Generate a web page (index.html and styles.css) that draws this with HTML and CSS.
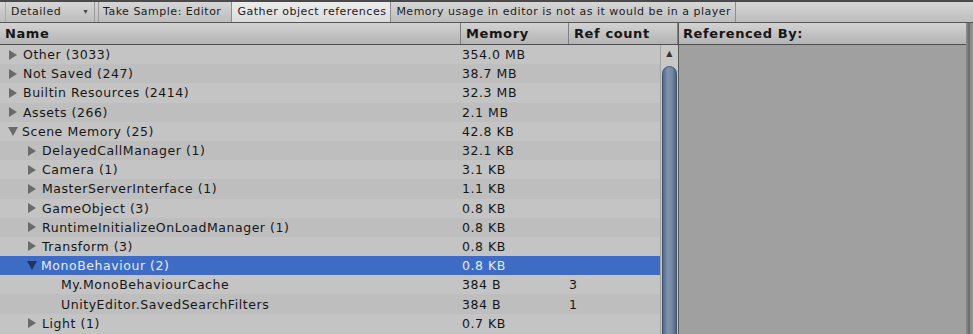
FILE: index.html
```html
<!DOCTYPE html>
<html lang="en">
<head>
  <meta charset="UTF-8" />
  <title>Memory Profiler – Detailed</title>
  <link rel="stylesheet" href="styles.css">
</head>
<body>
  <div class="toolbar">
    <div class="tb-btn dropdown">Detailed <span class="caret">&#9662;</span></div>
    <div class="tb-btn sample">Take Sample: Editor</div>
    <div class="tb-btn on">Gather object references</div>
    <div class="tb-btn">Memory usage in editor is not as it would be in a player</div>
  </div>

  <div class="main">
    <div class="tree-pane">
      <div class="header">
        <div class="hcol name">Name</div>
        <div class="hcol mem">Memory</div>
        <div class="hcol refs">Ref count</div>
      </div>
      <div class="tree-body">
        <div class="rows">
          <div class="row"><div class="name d0"><span class="arrow"></span>Other (3033)</div><div class="mem">354.0 MB</div><div class="refs"></div></div>
          <div class="row"><div class="name d0"><span class="arrow"></span>Not Saved (247)</div><div class="mem">38.7 MB</div><div class="refs"></div></div>
          <div class="row"><div class="name d0"><span class="arrow"></span>Builtin Resources (2414)</div><div class="mem">32.3 MB</div><div class="refs"></div></div>
          <div class="row"><div class="name d0"><span class="arrow"></span>Assets (266)</div><div class="mem">2.1 MB</div><div class="refs"></div></div>
          <div class="row"><div class="name d0"><span class="arrow open"></span>Scene Memory (25)</div><div class="mem">42.8 KB</div><div class="refs"></div></div>
          <div class="row"><div class="name d1"><span class="arrow"></span>DelayedCallManager (1)</div><div class="mem">32.1 KB</div><div class="refs"></div></div>
          <div class="row"><div class="name d1"><span class="arrow"></span>Camera (1)</div><div class="mem">3.1 KB</div><div class="refs"></div></div>
          <div class="row"><div class="name d1"><span class="arrow"></span>MasterServerInterface (1)</div><div class="mem">1.1 KB</div><div class="refs"></div></div>
          <div class="row"><div class="name d1"><span class="arrow"></span>GameObject (3)</div><div class="mem">0.8 KB</div><div class="refs"></div></div>
          <div class="row"><div class="name d1"><span class="arrow"></span>RuntimeInitializeOnLoadManager (1)</div><div class="mem">0.8 KB</div><div class="refs"></div></div>
          <div class="row"><div class="name d1"><span class="arrow"></span>Transform (3)</div><div class="mem">0.8 KB</div><div class="refs"></div></div>
          <div class="row selected"><div class="name d1"><span class="arrow open"></span>MonoBehaviour (2)</div><div class="mem">0.8 KB</div><div class="refs"></div></div>
          <div class="row"><div class="name d2">My.MonoBehaviourCache</div><div class="mem">384 B</div><div class="refs">3</div></div>
          <div class="row"><div class="name d2">UnityEditor.SavedSearchFilters</div><div class="mem">384 B</div><div class="refs">1</div></div>
          <div class="row"><div class="name d1"><span class="arrow"></span>Light (1)</div><div class="mem">0.7 KB</div><div class="refs"></div></div>
        </div>
        <div class="scrollbar">
          <div class="sb-up">&#9650;</div>
          <div class="sb-thumb"></div>
        </div>
      </div>
    </div>

    <div class="refs-pane">
      <div class="header">
        <div class="hcol">Referenced By:</div>
      </div>
      <div class="refs-body"></div>
    </div>

    <div class="edge"></div>
  </div>
</body>
</html>
```

FILE: styles.css
```css
html, body {
  margin: 0;
  padding: 0;
  height: 100%;
  overflow: hidden;
}
body {
  font-family: "DejaVu Sans", Verdana, sans-serif;
  font-size: 12.5px;
  letter-spacing: 0.55px;
  color: #161616;
  background: #c2c2c2;
  display: flex;
  flex-direction: column;
}

/* toolbar */
.toolbar {
  height: 20px;
  border-top: 2px solid #4a4a4a;
  border-bottom: 1px solid #575757;
  background: linear-gradient(#d6d6d6, #bdbdbd);
  display: flex;
  padding-left: 5px;
  font-size: 11px;
  letter-spacing: 0.5px;
}
.tb-btn {
  padding: 0 4px 0 5px;
  line-height: 20px;
  border-right: 1px solid #8c8c8c;
  color: #1c1c1c;
  white-space: nowrap;
}
.tb-btn.dropdown {
  width: 79px;
  position: relative;
  border-left: 1px solid #a8a8a8;
  margin-right: 3px;
  border-right: 1px solid #9a9a9a;
}
.tb-btn.dropdown + .tb-btn {
  border-left: 1px solid #9a9a9a;
}
.tb-btn.sample {
  padding-left: 4px;
  padding-right: 10px;
}
.caret {
  position: absolute;
  right: 6px;
  top: 0;
  font-size: 8px;
  color: #444;
}
.tb-btn.on {
  background: linear-gradient(#ececec, #dcdcdc);
}

/* main area */
.main {
  flex: 1;
  display: flex;
  min-height: 0;
}
.tree-pane {
  width: 678px;
  display: flex;
  flex-direction: column;
}
.header {
  height: 21px;
  display: flex;
  background: linear-gradient(#d2d2d2, #b4b4b4);
  border-bottom: 1px solid #4e4e4e;
  font-weight: bold;
  font-size: 13px;
  letter-spacing: 0.6px;
}
.hcol {
  line-height: 21px;
  padding-left: 5px;
  border-right: 1px solid #7e7e7e;
  box-sizing: border-box;
}
.header .name { width: 461px; }
.header .mem { width: 108px; }
.header .refs { flex: 1; }

.tree-body {
  flex: 1;
  display: flex;
  min-height: 0;
  overflow: hidden;
}
.rows {
  flex: 1;
}
.row {
  height: 19.2px;
  display: flex;
  align-items: center;
  background: #c4c4c4;
  white-space: nowrap;
}
.row:nth-child(even) {
  background: #bebebe;
}
.row.selected {
  background: #3e6cc4;
  color: #e3ebfb;
}
.row .name {
  width: 461px;
  box-sizing: border-box;
  display: flex;
  align-items: center;
}
.row .mem {
  width: 108px;
  padding-left: 1px;
  box-sizing: border-box;
}
.row .refs {
  flex: 1;
}
.d0 { padding-left: 9px; }
.d1 { padding-left: 28px; }
.d2 { padding-left: 61px; }
.arrow {
  width: 0;
  height: 0;
  border-left: 8px solid #6a6a6a;
  border-top: 5px solid transparent;
  border-bottom: 5px solid transparent;
  margin-right: 6px;
}
.arrow.open {
  border-left: 5px solid transparent;
  border-right: 5px solid transparent;
  border-top: 9px solid #6a6a6a;
  border-bottom: none;
  margin-left: -1px;
  margin-right: 4px;
}
.row.selected .arrow.open {
  border-top-color: #1e3466;
}

/* scrollbar */
.scrollbar {
  width: 17px;
  background: #c8c8c8;
  border-left: 1px solid #a4a4a4;
  display: flex;
  flex-direction: column;
  align-items: center;
}
.sb-up {
  height: 21px;
  font-size: 8px;
  line-height: 18px;
  color: #333;
}
.sb-thumb {
  width: 15px;
  flex: 1;
  margin-bottom: -20px;
  border-radius: 8px 8px 0 0;
  background: linear-gradient(90deg, #53688a, #8094b0 35%, #7388a6 70%, #4e6282);
  border: 1px solid #44536a;
  box-sizing: border-box;
}

/* referenced-by pane */
.refs-pane {
  flex: 1;
  display: flex;
  flex-direction: column;
  border-left: 1px solid #585858;
}
.refs-pane .hcol {
  flex: 1;
  padding-left: 4px;
  border-right: none;
}
.refs-body {
  flex: 1;
  background: #a0a0a0;
}
.edge {
  width: 7px;
  background: linear-gradient(90deg, #8c8c8c, #7a7a7a 30%, #5e5e5e 45%, #8a8a8a 60%, #939393);
}
```
